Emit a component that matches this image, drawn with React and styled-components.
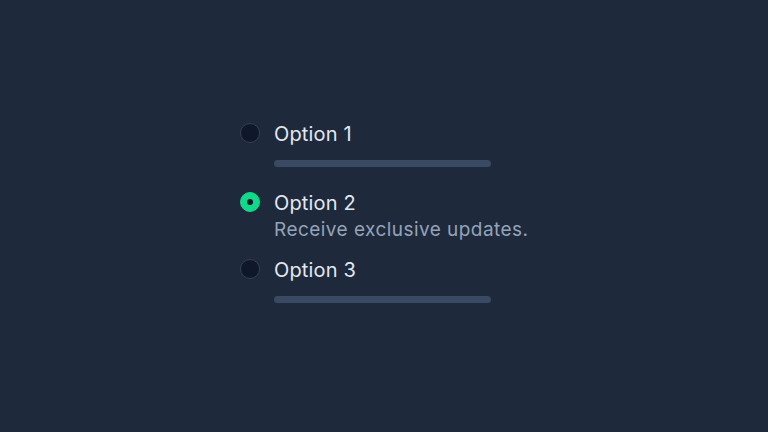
import React, { useState } from "react";
import styled, { createGlobalStyle } from "styled-components";

const GlobalStyle = createGlobalStyle`
  html, body {
    margin: 0;
    padding: 0;
    background: #1e293b;
  }
  body {
    font-family: Inter, "Noto Sans", sans-serif;
  }
`;

const Page = styled.div`
  width: 768px;
  height: 432px;
  display: flex;
  justify-content: center;
  align-items: flex-start;
  background: #1e293b;
`;

const Group = styled.div`
  display: flex;
  flex-direction: column;
  gap: 16px;
  width: 290px;
  margin-top: 122px;
  margin-left: 2px;
`;

const Item = styled.label`
  display: flex;
  gap: 14px;
  cursor: pointer;
`;

const Radio = styled.span`
  flex: none;
  box-sizing: border-box;
  width: 20px;
  height: 20px;
  margin-top: 1px;
  border-radius: 50%;
  display: flex;
  align-items: center;
  justify-content: center;
  background: ${({ checked }) => (checked ? "#10d98a" : "#0f172a")};
  border: 1px solid ${({ checked }) => (checked ? "#10d98a" : "#334155")};

  &::after {
    content: "";
    display: ${({ checked }) => (checked ? "block" : "none")};
    width: 6px;
    height: 6px;
    border-radius: 50%;
    background: #0f172a;
  }
`;

const Body = styled.div`
  display: flex;
  flex-direction: column;
`;

const Label = styled.span`
  font-size: 20px;
  line-height: 24px;
  letter-spacing: 0.15px;
  color: #e2e8f0;
`;

const Description = styled.span`
  margin-top: 3px;
  font-size: 19px;
  line-height: 24px;
  letter-spacing: 0.45px;
  color: #94a3b8;
`;

const Placeholder = styled.span`
  display: block;
  width: 217px;
  height: 7px;
  margin: 14px 0 8px;
  border-radius: 4px;
  background: #3b4a63;
`;

const options = [
  { id: 1, label: "Option 1", description: "Receive exclusive updates." },
  { id: 2, label: "Option 2", description: "Receive exclusive updates." },
  { id: 3, label: "Option 3", description: "Receive exclusive updates." },
];

export default function App() {
  const [selected, setSelected] = useState(2);

  return (
    <Page>
      <GlobalStyle />
      <Group role="radiogroup">
        {options.map((opt) => {
          const checked = opt.id === selected;
          return (
            <Item key={opt.id} onClick={() => setSelected(opt.id)}>
              <Radio checked={checked} role="radio" aria-checked={checked} />
              <Body>
                <Label>{opt.label}</Label>
                {checked ? (
                  <Description>{opt.description}</Description>
                ) : (
                  <Placeholder />
                )}
              </Body>
            </Item>
          );
        })}
      </Group>
    </Page>
  );
}
